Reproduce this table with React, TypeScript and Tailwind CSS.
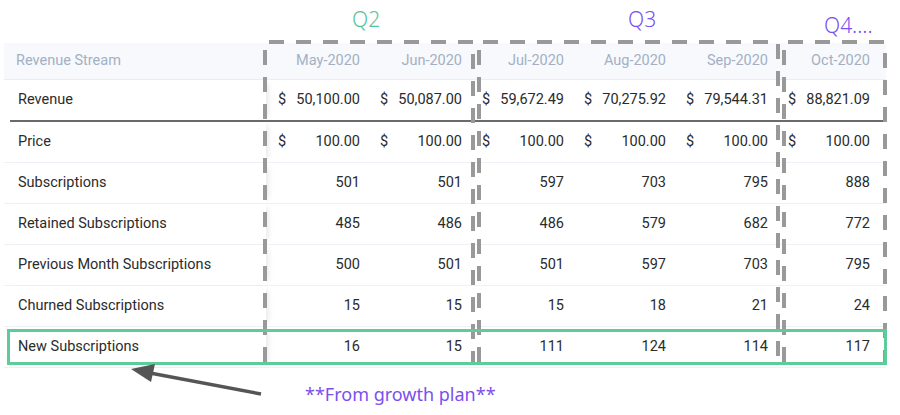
import React from 'react';

const months = ['May-2020', 'Jun-2020', 'Jul-2020', 'Aug-2020', 'Sep-2020', 'Oct-2020'];

const revenue = ['50,100.00', '50,087.00', '59,672.49', '70,275.92', '79,544.31', '88,821.09'];

const rows = [
  { label: 'Price', money: true, values: ['100.00', '100.00', '100.00', '100.00', '100.00', '100.00'] },
  { label: 'Subscriptions', values: ['501', '501', '597', '703', '795', '888'] },
  { label: 'Retained Subscriptions', values: ['485', '486', '486', '579', '682', '772'] },
  { label: 'Previous Month Subscriptions', values: ['500', '501', '501', '597', '703', '795'] },
  { label: 'Churned Subscriptions', values: ['15', '15', '15', '18', '21', '24'] },
  { label: 'New Subscriptions', values: ['16', '15', '111', '124', '114', '117'] },
];

const grid = 'grid grid-cols-[262px_repeat(5,102px)_110px]';

function Cell({ value, money, last }: { value: string; money?: boolean; last?: boolean }) {
  return (
    <div className={`flex items-center ${money ? 'justify-between pl-[12px]' : 'justify-end'} ${last ? 'pr-[16px]' : 'pr-[8px]'}`}>
      {money && <span>$</span>}
      <span>{value}</span>
    </div>
  );
}

export default function App() {
  return (
    <div className="relative w-[900px] h-[415px] bg-white overflow-hidden font-['Roboto',sans-serif] text-[14.5px] text-[#2b2b2b]">
      <div className="h-[43px]" />
      <div className="ml-[4px] w-[882px]">
        {/* header */}
        <div className={`${grid} h-[37px] bg-[#f7f9fc] border-b border-[#e9eef5] text-[#a3b0c4]`}>
          <div className="flex items-center pl-[12px]">Revenue Stream</div>
          {months.map((m, i) => (
            <div key={m} className={`flex items-center justify-end ${i === 5 ? 'pr-[16px]' : 'pr-[8px]'}`}>{m}</div>
          ))}
        </div>

        {/* revenue */}
        <div className={`${grid} h-[40px]`}>
          <div className="flex items-center pl-[14px] relative z-[1] shadow-[6px_0_6px_-4px_rgba(0,0,0,0.1)]">Revenue</div>
          {revenue.map((v, i) => (
            <Cell key={i} value={v} money last={i === 5} />
          ))}
        </div>
        <div className="ml-[6px] h-[2px] bg-[#6b6b6b]" />

        {rows.map((r) => (
          <div key={r.label} className={`${grid} h-[41px] border-b border-[#eef2f7]`}>
            <div className="flex items-center pl-[14px] relative z-[1] bg-white shadow-[6px_0_6px_-4px_rgba(0,0,0,0.1)]">{r.label}</div>
            {r.values.map((v, i) => (
              <Cell key={i} value={v} money={r.money} last={i === 5} />
            ))}
          </div>
        ))}
      </div>

      {/* annotations */}
      <div className="absolute left-[352px] top-[4px] text-[21px] text-[#55c596] font-['Noto_Sans',sans-serif] font-light">Q2</div>
      <div className="absolute left-[628px] top-[4px] text-[21px] text-[#7a4ff0] font-['Noto_Sans',sans-serif] font-light">Q3</div>
      <div className="absolute left-[824px] top-[10px] text-[21px] text-[#7a4ff0] font-['Noto_Sans',sans-serif] font-light">Q4....</div>
      <div className="absolute left-[305px] top-[381px] text-[18px] text-[#7a4ff0] font-['Noto_Sans',sans-serif]">**From growth plan**</div>

      <svg className="absolute inset-0 z-10 pointer-events-none" width="900" height="415" viewBox="0 0 900 415">
        <g fill="none" stroke="#999" strokeWidth="4" strokeDasharray="15 12">
          <path d="M265 362 V42 H473 V362" />
          <path d="M479 362 V42 H778 V362" />
          <path d="M784 362 V42 H885 V362" />
        </g>
        <rect x="8.5" y="330.5" width="877" height="33" fill="none" stroke="#5ecb9b" strokeWidth="3" />
        <line x1="261" y1="394" x2="150" y2="373" stroke="#555" strokeWidth="3.5" />
        <polygon points="131,369 155,364 151,382" fill="#555" />
      </svg>
    </div>
  );
}
